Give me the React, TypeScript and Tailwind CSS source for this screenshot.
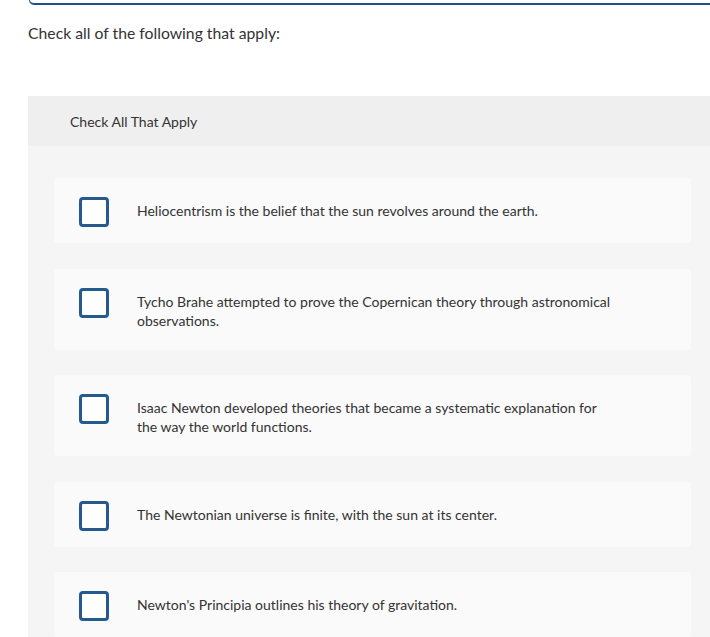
const options = [
  "Heliocentrism is the belief that the sun revolves around the earth.",
  "Tycho Brahe attempted to prove the Copernican theory through astronomical observations.",
  "Isaac Newton developed theories that became a systematic explanation for the way the world functions.",
  "The Newtonian universe is finite, with the sun at its center.",
  "Newton's Principia outlines his theory of gravitation.",
];

function Checkbox() {
  return (
    <span className="block h-[30px] w-[30px] shrink-0 rounded-[4px] border-[3px] border-[#245a8e] bg-white" />
  );
}

export default function App() {
  return (
    <div
      className="h-[637px] w-[710px] overflow-hidden bg-white text-[#333]"
      style={{ fontFamily: "Lato, 'Open Sans', sans-serif" }}
    >
      <div className="ml-[29px] h-[5px] w-[700px] rounded-bl-[8px] border-b-2 border-l border-[#1d4f8c]" />

      <p className="ml-[28px] mt-[19px] text-[15.75px] leading-[18px]">
        Check all of the following that apply:
      </p>

      <section className="ml-[28px] mt-[54px] w-[689px] bg-[#f5f5f5]">
        <div className="flex h-[50px] items-center bg-[#efefef] pl-[42px] text-[14px]">
          Check All That Apply
        </div>
        <ul className="flex flex-col gap-[25.5px] px-[26px] pt-[32px]">
          {options.map((text) => (
            <li
              key={text}
              className="flex items-start rounded-[4px] bg-[#fafafa] pb-[16px] pl-[25px] pr-[76px] pt-[19px]"
            >
              <Checkbox />
              <span className="ml-[28px] pb-[4px] pt-[4px] text-[14px] leading-[19px]">
                {text}
              </span>
            </li>
          ))}
        </ul>
      </section>
    </div>
  );
}
